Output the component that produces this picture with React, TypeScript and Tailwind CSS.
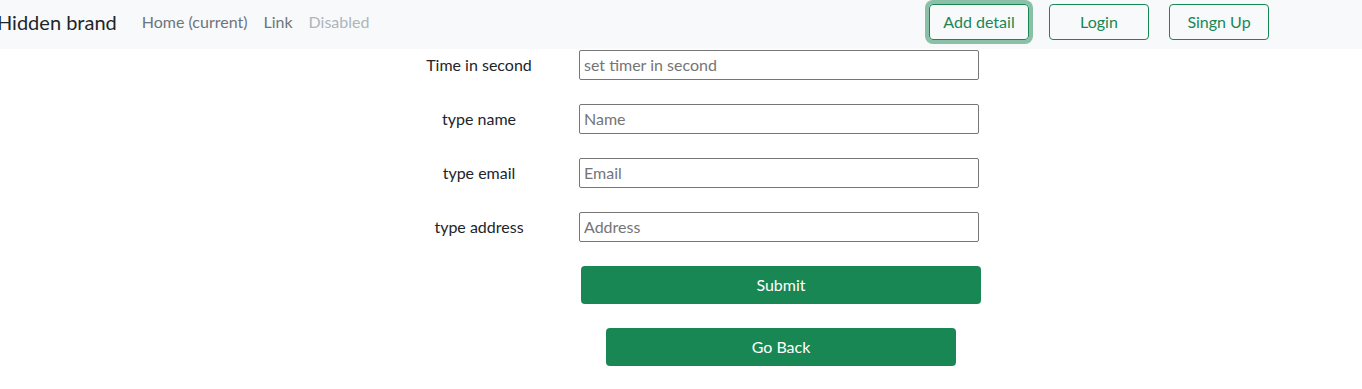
export default function App() {
  const rows = [
    { label: "Time in second", placeholder: "set timer in second" },
    { label: "type name", placeholder: "Name" },
    { label: "type email", placeholder: "Email" },
    { label: "type address", placeholder: "Address" },
  ];

  return (
    <div className="min-h-screen bg-white text-[#212529] font-['Lato',sans-serif]">
      <nav className="flex items-center h-[49px] pb-[5px] bg-[#f8f9fa]">
        <span className="-ml-[3px] text-[20px] text-[#212529]">Hidden brand</span>
        <ul className="flex items-center ml-[17px] text-[16px]">
          <li className="px-2 text-[#6c757d]">Home (current)</li>
          <li className="px-2 text-[#6c757d]">Link</li>
          <li className="px-2 text-[#adb5bd]">Disabled</li>
        </ul>
        <div className="ml-auto mr-[93px] flex items-center gap-5">
          <button className="w-[100px] h-[36px] rounded border border-[#198754] text-[#198754] text-[16px] ring-4 ring-[#198754]/50">
            Add detail
          </button>
          <button className="w-[100px] h-[36px] rounded border border-[#198754] text-[#198754] text-[16px]">
            Login
          </button>
          <button className="w-[100px] h-[36px] rounded border border-[#198754] text-[#198754] text-[16px]">
            Singn Up
          </button>
        </div>
      </nav>

      <form className="ml-[379px] mt-[1px] flex flex-col gap-6" onSubmit={(e) => e.preventDefault()}>
        {rows.map((r) => (
          <div key={r.label} className="flex items-center">
            <label className="w-[200px] text-center text-[16px]">{r.label}</label>
            <input
              placeholder={r.placeholder}
              className="w-[400px] h-[30px] border border-[#767676] rounded-[2px] px-[4px] pb-[2px] text-[16px] placeholder:text-[#757575] outline-none"
            />
          </div>
        ))}
        <button
          type="submit"
          className="ml-[202px] w-[400px] h-[38px] rounded bg-[#198754] text-white text-[16px]"
        >
          Submit
        </button>
        <button
          type="button"
          className="ml-[227px] w-[350px] h-[38px] rounded bg-[#198754] text-white text-[16px]"
        >
          Go Back
        </button>
      </form>
    </div>
  );
}
